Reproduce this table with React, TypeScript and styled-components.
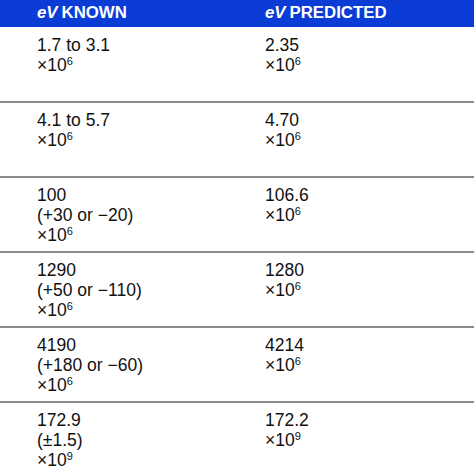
import styled, { createGlobalStyle } from 'styled-components';

const GlobalStyle = createGlobalStyle`
  html, body {
    margin: 0;
    padding: 0;
    background: #ffffff;
  }
  body {
    font-family: "Liberation Sans", Arial, sans-serif;
    color: #111111;
  }
`;

const Table = styled.div`
  width: 474px;
  height: 474px;
  overflow: hidden;
  display: flex;
  flex-direction: column;
`;

const Header = styled.div`
  height: 27px;
  flex-shrink: 0;
  background: #0b3dd6;
  display: grid;
  grid-template-columns: 228px 1fr;
  align-items: center;
  padding-left: 37px;
  color: #ffffff;
  font-weight: bold;
  font-size: 16.8px;
  line-height: 20px;
  padding-bottom: 2px;
  margin-bottom: 1px;
  box-sizing: border-box;
`;

const HeadCell = styled.div`
  white-space: nowrap;
  em {
    font-style: italic;
    margin-right: 4px;
  }
`;

const Row = styled.div<{ $last?: boolean }>`
  height: ${(p) => (p.$last ? 80 : 75)}px;
  flex-shrink: 0;
  display: grid;
  grid-template-columns: 228px 1fr;
  padding: 7px 0 0 37px;
  box-sizing: border-box;
  border-bottom: ${(p) => (p.$last ? 'none' : '2px solid #8c8c8c')};
`;

const Cell = styled.div`
  font-size: 17.5px;
  line-height: 20px;
  white-space: nowrap;
`;

const Line = styled.div`
  height: 20px;
`;

const Sup = styled.span`
  font-size: 11px;
  vertical-align: 6px;
  line-height: 0;
`;

type Exp = { pow: string };

const Times = ({ pow }: Exp) => (
  <Line>
    ×10<Sup>{pow}</Sup>
  </Line>
);

const rows: { known: string[]; predicted: string; pow: string }[] = [
  { known: ['1.7 to 3.1'], predicted: '2.35', pow: '6' },
  { known: ['4.1 to 5.7'], predicted: '4.70', pow: '6' },
  { known: ['100', '(+30 or \u221220)'], predicted: '106.6', pow: '6' },
  { known: ['1290', '(+50 or \u2212110)'], predicted: '1280', pow: '6' },
  { known: ['4190', '(+180 or \u221260)'], predicted: '4214', pow: '6' },
  { known: ['172.9', '(\u00b11.5)'], predicted: '172.2', pow: '9' },
];

export default function App() {
  return (
    <>
      <GlobalStyle />
      <Table>
        <Header>
          <HeadCell>
            <em>eV</em>KNOWN
          </HeadCell>
          <HeadCell>
            <em>eV</em>PREDICTED
          </HeadCell>
        </Header>
        {rows.map((row, index) => (
          <Row key={index} $last={index === rows.length - 1}>
            <Cell>
              {row.known.map((text, i) => (
                <Line key={i}>{text}</Line>
              ))}
              <Times pow={row.pow} />
            </Cell>
            <Cell>
              <Line>{row.predicted}</Line>
              <Times pow={row.pow} />
            </Cell>
          </Row>
        ))}
      </Table>
    </>
  );
}
